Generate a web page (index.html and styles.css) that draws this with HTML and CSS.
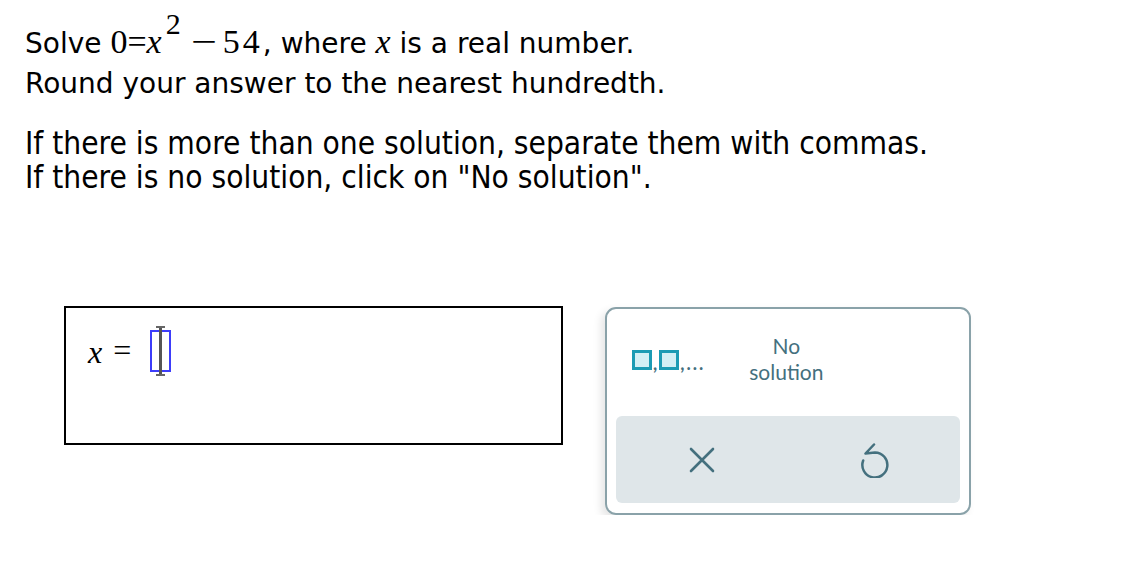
FILE: index.html
```html
<!DOCTYPE html>
<html>
<head>
  <title>Solve quadratic</title>
  <meta content="width=device-width, initial-scale=1" name="viewport" />
  <link rel="stylesheet" href="styles.css">
</head>
<body>
  <div class="question">
    <p class="lead">Solve <span class="math">0<span class="op">=</span><i>x</i><sup>2</sup><span class="minus">&minus;</span><span class="num">54</span></span>, where <i class="math">x</i> is a real number.</p>
    <p class="lead">Round your answer to the nearest hundredth.</p>
    <p class="note">If there is more than one solution, separate them with commas.<br>If there is no solution, click on "No solution".</p>
  </div>

  <div class="workArea">
    <div class="answerBox">
      <span class="math answerVar"><i>x</i></span>
      <span class="eq">=</span>
      <span class="cursorBox"><span class="cursor"></span></span>
    </div>

    <div class="keypad">
      <div class="keyRow">
        <button type="button" class="key listKey" title="Add solution">
          <span class="slot"></span><span class="comma">,</span><span class="slot"></span><span class="comma">,...</span>
        </button>
        <button type="button" class="key textKey">No<br>solution</button>
      </div>
      <div class="actionRow">
        <button type="button" class="action" title="Clear">
          <svg width="26" height="26" viewBox="0 0 26 26"><path d="M2 2 L24 24 M24 2 L2 24" stroke="#44707e" stroke-width="2.6" stroke-linecap="round" fill="none"/></svg>
        </button>
        <button type="button" class="action" title="Undo">
          <svg width="30" height="36" viewBox="0 0 30 36"><path d="M15 2.5 L6.5 11.5 L16 10.5 A12.5 12.5 0 1 1 4.2 18.5" stroke="#44707e" stroke-width="2.5" stroke-linecap="round" stroke-linejoin="round" fill="none"/></svg>
        </button>
      </div>
    </div>
  </div>
</body>
</html>
```

FILE: styles.css
```css
body {
  margin: 0;
  font-family: "DejaVu Sans", Verdana, sans-serif;
  color: #000;
  background: #fff;
}
.question {
  padding: 22px 0 0 25px;
}
.lead {
  font-size: 28px;
  margin: 0;
  line-height: 40px;
}
.note {
  font-family: "DejaVu Sans Condensed", "DejaVu Sans", sans-serif;
  font-size: 31.4px;
  line-height: 34px;
  margin: 22px 0 0 0;
}
.math {
  font-family: "Liberation Serif", "Times New Roman", serif;
  font-size: 34px;
}
.math i, i.math {
  font-style: italic;
}
.op {
  margin: 0;
}
.minus {
  display: inline-block;
  transform: scaleX(1.35);
  margin: 0 10px 0 13px;
}
.num {
  letter-spacing: 3px;
}
sup {
  font-size: 30px;
  vertical-align: 19px;
  line-height: 0;
  margin-left: 4px;
}
.workArea {
  display: flex;
  align-items: flex-start;
  gap: 42px;
  padding: 112px 0 0 64px;
}
.answerBox {
  width: 499px;
  height: 139px;
  border: 2px solid #000;
  display: flex;
  align-items: flex-start;
  padding: 20px 0 0 22px;
  box-sizing: border-box;
}
.answerVar {
  font-size: 32px;
  margin-top: 6px;
}
.eq {
  font-family: "Liberation Serif", serif;
  font-size: 32px;
  margin: 4px 0 0 11px;
}
.cursorBox {
  margin: 2px 0 0 19px;
  width: 21px;
  height: 42px;
  border: 2px solid #3d3dfa;
  box-sizing: border-box;
  position: relative;
}
.cursor {
  position: absolute;
  left: 7px;
  top: -6px;
  width: 3px;
  height: 50px;
  background: #555;
}
.cursor::before, .cursor::after {
  content: "";
  position: absolute;
  left: -3px;
  width: 9px;
  height: 2px;
  background: #666;
}
.cursor::before {
  top: 0;
}
.cursor::after {
  bottom: 0;
}
.keypad {
  width: 366px;
  height: 208px;
  box-sizing: border-box;
  border: 2px solid #8aa2a9;
  border-radius: 11px;
  box-shadow: -4px 4px 8px rgba(0, 0, 0, 0.1);
  padding: 0 9px 10px 9px;
  display: flex;
  flex-direction: column;
  margin-top: 1px;
}
.keyRow {
  display: flex;
  height: 107px;
  align-items: flex-start;
}
.key {
  background: none;
  border: none;
  cursor: pointer;
  font-family: "Lato", "Open Sans", sans-serif;
  color: #44707e;
}
.listKey {
  display: flex;
  align-items: flex-end;
  margin: 37px 0 0 16px;
  padding: 0;
  height: 24px;
}
.slot {
  width: 20px;
  height: 20px;
  border: 3px solid #1b9bb4;
  background: #d2eff5;
  box-sizing: border-box;
}
.comma {
  font-size: 18px;
  font-weight: bold;
  line-height: 14px;
  letter-spacing: 2px;
  margin-left: 1px;
}
.textKey {
  margin: 24px 0 0 44px;
  font-size: 21px;
  line-height: 26px;
  padding: 0;
  text-align: center;
}
.actionRow {
  flex: 1;
  display: flex;
  background: #dfe6e9;
  border-radius: 6px;
}
.action {
  flex: 1;
  background: none;
  border: none;
  display: flex;
  align-items: center;
  justify-content: center;
  cursor: pointer;
}
```
